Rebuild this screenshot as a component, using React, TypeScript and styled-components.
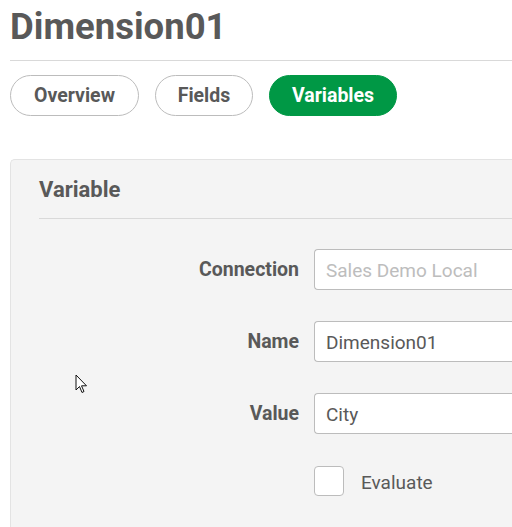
import React from 'react';
import styled, { createGlobalStyle } from 'styled-components';

const GlobalStyle = createGlobalStyle`
  html, body {
    margin: 0;
    padding: 0;
    background: #fff;
    overflow: hidden;
  }
  body {
    font-family: Roboto, "Liberation Sans", sans-serif;
    color: #595959;
  }
`;

const Page = styled.div`
  position: relative;
  width: 512px;
  height: 527px;
  padding: 0 0 0 10px;
  box-sizing: border-box;
  overflow: hidden;
`;

const Title = styled.h1`
  margin: 0;
  padding-top: 6px;
  height: 54px;
  font-size: 36.5px;
  font-weight: 700;
  line-height: 42px;
  color: #595959;
`;

const Divider = styled.hr`
  margin: 0;
  border: none;
  border-top: 1px solid #d9d9d9;
`;

const Tabs = styled.nav`
  display: flex;
  gap: 16px;
  margin-top: 14px;
`;

const Tab = styled.button<{ $active?: boolean; $width: number }>`
  height: 41px;
  width: ${(p) => p.$width}px;
  box-sizing: border-box;
  padding: 0;
  border-radius: 21px;
  border: 1px solid ${(p) => (p.$active ? '#009845' : '#bcbcbc')};
  background: ${(p) => (p.$active ? '#009845' : '#fff')};
  color: ${(p) => (p.$active ? '#fff' : '#595959')};
  font-family: Roboto, "Liberation Sans", sans-serif;
  font-size: 19.5px;
  font-weight: 700;
  cursor: pointer;
`;

const Panel = styled.section`
  margin-top: 43px;
  background: #f4f4f4;
  border: 1px solid #e3e3e3;
  border-right: none;
  border-bottom: none;
  border-top-left-radius: 5px;
  padding: 17px 0 0 28px;
  height: 400px;
`;

const PanelTitle = styled.h2`
  margin: 0;
  font-size: 22px;
  font-weight: 700;
  line-height: 25px;
  color: #595959;
`;

const PanelDivider = styled.hr`
  margin: 16px 0 0 0;
  border: none;
  border-top: 1px solid #d9d9d9;
`;

const Form = styled.div`
  display: grid;
  grid-template-columns: 260px 1fr;
  column-gap: 15px;
  row-gap: 31px;
  align-items: center;
  margin-top: 30px;
`;

const Label = styled.label`
  text-align: right;
  font-size: 19.5px;
  font-weight: 700;
  color: #595959;
`;

const Input = styled.input`
  height: 41px;
  box-sizing: border-box;
  width: 220px;
  border: 1px solid #bcbcbc;
  border-right: none;
  border-radius: 4px 0 0 4px;
  background: #fff;
  padding: 1px 11px 0;
  font-family: Roboto, "Liberation Sans", sans-serif;
  font-size: 19px;
  color: #595959;
  outline: none;
  &::placeholder {
    color: #bdbdbd;
  }
`;

const CheckRow = styled.div`
  display: flex;
  align-items: center;
  gap: 17px;
  margin-top: 1px;
`;

const Box = styled.span`
  width: 30px;
  height: 30px;
  box-sizing: border-box;
  border: 1px solid #bcbcbc;
  border-radius: 4px;
  background: #fff;
`;

const CheckText = styled.span`
  font-size: 19px;
  color: #595959;
  padding-top: 3px;
`;

const Pointer = styled.svg`
  position: absolute;
  left: 75px;
  top: 374px;
`;

export default function App() {
  return (
    <>
      <GlobalStyle />
      <Page>
        <Title>Dimension01</Title>
        <Divider />
        <Tabs>
          <Tab $width={129}>Overview</Tab>
          <Tab $width={98}>Fields</Tab>
          <Tab $width={128} $active>
            Variables
          </Tab>
        </Tabs>
        <Panel>
          <PanelTitle>Variable</PanelTitle>
          <PanelDivider />
          <Form>
            <Label>Connection</Label>
            <Input placeholder="Sales Demo Local" readOnly />
            <Label>Name</Label>
            <Input defaultValue="Dimension01" />
            <Label>Value</Label>
            <Input defaultValue="City" />
            <span />
            <CheckRow>
              <Box />
              <CheckText>Evaluate</CheckText>
            </CheckRow>
          </Form>
        </Panel>
        <Pointer width="14" height="21" viewBox="0 0 14 21">
          <path
            d="M1 1 L1 16 L4.5 12.5 L7 18.5 L9 17.5 L6.5 11.8 L11.5 11.8 Z"
            fill="#fff"
            stroke="#111"
            strokeWidth="1"
          />
        </Pointer>
      </Page>
    </>
  );
}
